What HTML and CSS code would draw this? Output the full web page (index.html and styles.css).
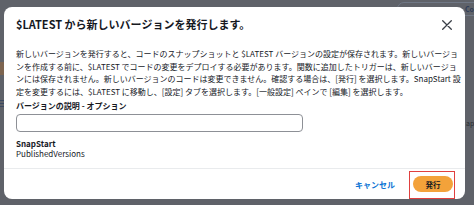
FILE: index.html
```html
<!DOCTYPE html>
<html lang="ja">
<head>
<meta charset="utf-8">
<link rel="stylesheet" href="styles.css">
</head>
<body>
<div class="page">
  <div class="bg-btn"><span>Co</span></div>
  <div class="bg-band"></div>
  <svg class="bg-menu" width="4" height="7" viewBox="0 0 4 7"><path d="M0 0.5H4M0 3.5H4M0 6.5H4" stroke="#3c4a63" stroke-width="1"/></svg>
  <div class="bg-text">ap</div>
</div>
<div class="modal">
  <div class="header">
    <h1 class="title">$LATEST から新しいバージョンを発行します。</h1>
    <svg class="close" width="10" height="10" viewBox="0 0 10 10"><path d="M0.7 0.7L9.3 9.3M9.3 0.7L0.7 9.3" stroke="#3a3f47" stroke-width="1.3" fill="none" stroke-linecap="round"/></svg>
  </div>
  <div class="content">
    <p class="desc">新しいバージョンを発行すると、コードのスナップショットと $LATEST バージョンの設定が保存されます。新しいバージョ<br>ンを作成する前に、$LATEST でコードの変更をデプロイする必要があります。関数に追加したトリガーは、新しいバージョ<br>ンには保存されません。新しいバージョンのコードは変更できません。確認する場合は、[発行] を選択します。SnapStart 設<br>定を変更するには、$LATEST に移動し、[設定] タブを選択します。[一般設定] ペインで [編集] を選択します。</p>
    <div class="label">バージョンの説明 - オプション</div>
    <div class="input"></div>
    <div class="kv-key">SnapStart</div>
    <div class="kv-val">PublishedVersions</div>
  </div>
  <div class="footer">
    <span class="cancel">キャンセル</span>
    <span class="publish-wrap">
      <span class="publish">発行</span>
      <span class="highlight"></span>
    </span>
  </div>
</div>
</body>
</html>
```
FILE: styles.css
```css
html, body {
  margin: 0;
  padding: 0;
}
body {
  width: 474px;
  height: 205px;
  overflow: hidden;
  background: #5f6269;
  font-family: "Noto Sans CJK JP", "Noto Sans", sans-serif;
  color: #16191f;
  position: relative;
}
.bg-btn {
  position: absolute;
  left: 397px;
  top: 2px;
  width: 90px;
  height: 14px;
  border: 1px solid #6f7785;
  border-radius: 8px;
  box-sizing: border-box;
}
.bg-btn span {
  position: absolute;
  left: 67px;
  top: 1px;
  font-size: 7px;
  line-height: 10px;
  color: #2f3d57;
  font-weight: bold;
}
.bg-band {
  position: absolute;
  left: 0;
  top: 62px;
  width: 6px;
  height: 13px;
  background: #7d6550;
}
.bg-menu {
  position: absolute;
  left: 0;
  top: 100px;
}
.bg-text {
  position: absolute;
  left: 466px;
  top: 118px;
  font-size: 7px;
  color: #2a2d33;
}
.modal {
  position: absolute;
  left: 4px;
  top: 7px;
  width: 461px;
  height: 192px;
  background: #fff;
  border-radius: 8px;
  display: flex;
  flex-direction: column;
  box-sizing: border-box;
}
.header {
  display: flex;
  justify-content: space-between;
  align-items: center;
  padding: 10px 13px 0 12px;
}
.title {
  margin: 0;
  font-size: 11px;
  line-height: 15px;
  font-weight: bold;
  color: #16191f;
}
.close {
  display: block;
}
.content {
  padding: 0 10px 0 12px;
}
.desc {
  margin: 16px 0 0 0;
  font-size: 8px;
  line-height: 12.5px;
  white-space: nowrap;
  color: #16191f;
}
.label {
  margin-top: 2px;
  font-size: 8px;
  line-height: 12px;
  font-weight: bold;
}
.input {
  margin-top: 2px;
  width: 287px;
  height: 18px;
  border: 1px solid #8d9096;
  border-radius: 4px;
  box-sizing: border-box;
}
.kv-key {
  margin-top: 7px;
  font-size: 8px;
  line-height: 10px;
  font-weight: bold;
}
.kv-val {
  font-size: 8px;
  line-height: 10px;
}
.footer {
  margin-top: 9px;
  border-top: 1px solid #e9ebed;
  flex: 1;
  display: flex;
  justify-content: flex-end;
  align-items: center;
  gap: 18px;
  padding: 0 12px 0 0;
}
.cancel {
  font-size: 8px;
  font-weight: bold;
  color: #0972d3;
}
.publish-wrap {
  position: relative;
  display: flex;
}
.publish {
  display: flex;
  align-items: center;
  justify-content: center;
  width: 40px;
  height: 16px;
  border-radius: 8px;
  background: #f3a23a;
  font-size: 7.5px;
  font-weight: bold;
  color: #16191f;
}
.highlight {
  position: absolute;
  left: -4px;
  right: -2px;
  top: -5px;
  bottom: -7px;
  border: 1.5px solid #e0403f;
}
```
